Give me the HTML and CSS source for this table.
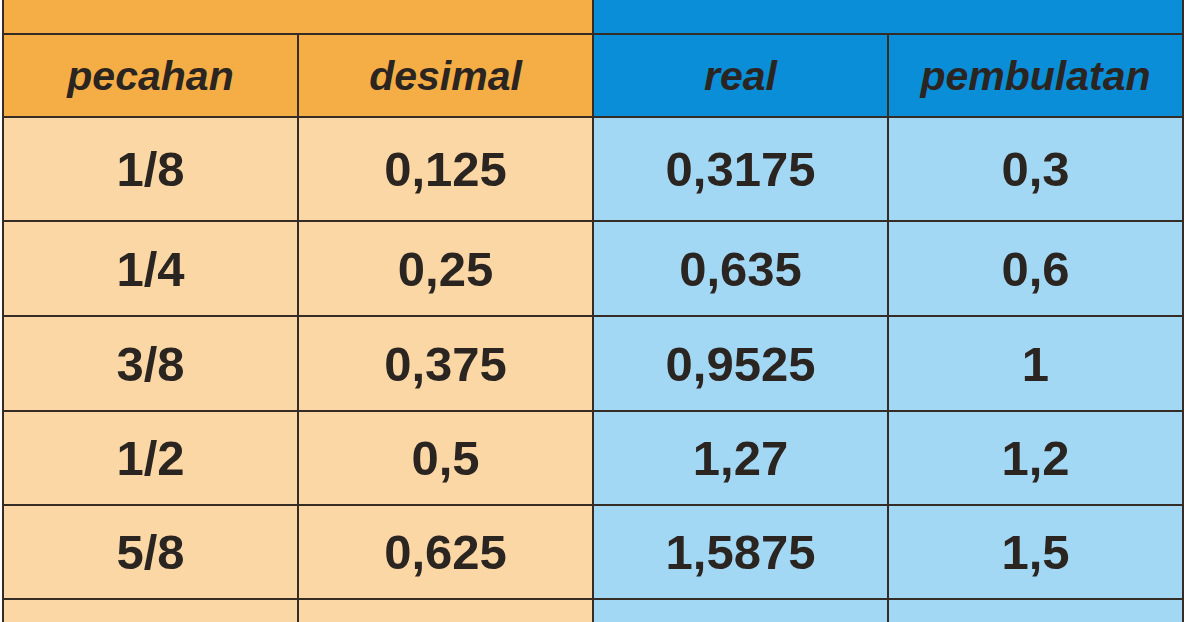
FILE: index.html
```html
<!DOCTYPE html>
<html>
<head>
<meta charset="utf-8">
<link rel="stylesheet" href="styles.css">
</head>
<body>
<div class="table">
  <div class="cell group orange-head"></div>
  <div class="cell group blue-head"></div>

  <div class="cell head orange-head">pecahan</div>
  <div class="cell head orange-head">desimal</div>
  <div class="cell head blue-head">real</div>
  <div class="cell head blue-head">pembulatan</div>

  <div class="cell orange">1/8</div>
  <div class="cell orange">0,125</div>
  <div class="cell blue">0,3175</div>
  <div class="cell blue">0,3</div>

  <div class="cell orange">1/4</div>
  <div class="cell orange">0,25</div>
  <div class="cell blue">0,635</div>
  <div class="cell blue">0,6</div>

  <div class="cell orange">3/8</div>
  <div class="cell orange">0,375</div>
  <div class="cell blue">0,9525</div>
  <div class="cell blue">1</div>

  <div class="cell orange">1/2</div>
  <div class="cell orange">0,5</div>
  <div class="cell blue">1,27</div>
  <div class="cell blue">1,2</div>

  <div class="cell orange">5/8</div>
  <div class="cell orange">0,625</div>
  <div class="cell blue">1,5875</div>
  <div class="cell blue">1,5</div>

  <div class="cell orange"></div>
  <div class="cell orange"></div>
  <div class="cell blue"></div>
  <div class="cell blue"></div>
</div>
</body>
</html>
```

FILE: styles.css
```css
html, body {
  margin: 0;
  padding: 0;
  background: #ffffff;
  overflow: hidden;
}

body {
  width: 1186px;
  height: 622px;
}

.table {
  margin-left: 2px;
  width: 1182px;
  height: 622px;
  box-sizing: border-box;
  padding: 0 2px;
  background: #352c26;
  display: grid;
  grid-template-columns: repeat(4, 1fr);
  grid-template-rows: 33px 81px 102px 93px 93px 92px 92px 22px;
  gap: 2px;
  font-family: "Liberation Sans", Arial, sans-serif;
  font-weight: bold;
  color: #2b2522;
}

.cell {
  display: flex;
  align-items: center;
  justify-content: center;
  font-size: 49px;
  line-height: 1;
  padding-top: 1px;
}

.group {
  grid-column: span 2;
}

.head {
  font-style: italic;
  font-size: 41px;
}

.orange-head {
  background: #f5ae45;
}

.blue-head {
  background: #0a8ed8;
}

.orange {
  background: #fbd7a5;
}

.blue {
  background: #a3d8f4;
}
```
